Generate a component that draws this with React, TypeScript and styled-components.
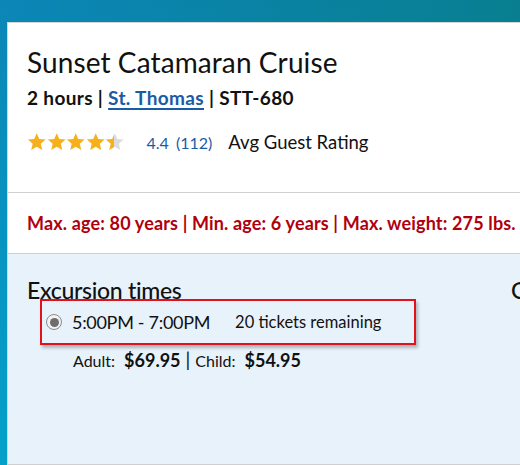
import React from "react";
import styled, { createGlobalStyle } from "styled-components";

const Global = createGlobalStyle`
  html, body { margin: 0; padding: 0; }
  body {
    width: 520px;
    height: 465px;
    overflow: hidden;
    font-family: Lato, "Open Sans", sans-serif;
    background:
      linear-gradient(to right, rgba(8,126,140,0) 0%, rgba(8,126,140,0.9) 100%),
      linear-gradient(to bottom, #0b86b7 0%, #04a1ca 100%);
  }
`;

const Page = styled.div`
  padding: 22px 0 0 7px;
  height: 465px;
  box-sizing: border-box;
  overflow: hidden;
`;

const Card = styled.div`
  width: 640px;
  height: 443px;
  background: #fff;
  border-top: 1px solid #d6d6d6;
  border-left: 1px solid #d6d6d6;
  display: flex;
  flex-direction: column;
  box-sizing: border-box;
`;

const Header = styled.div`
  padding: 22px 0 0 19px;
  height: 170px;
  box-sizing: border-box;
  border-bottom: 1px solid #d0d0d0;
`;

const Title = styled.h1`
  margin: 0;
  font-weight: 400;
  font-size: 28px;
  line-height: 34px;
  color: #111;
  letter-spacing: 0.1px;
`;

const Meta = styled.div`
  font-size: 19px;
  font-weight: 700;
  color: #111;
  margin-top: 7px;
  line-height: 24px;
  letter-spacing: 0.35px;
`;

const Link = styled.a`
  color: #1a5ba6;
  text-decoration: underline;
  text-underline-offset: 3px;
  text-decoration-thickness: 2px;
`;

const RatingRow = styled.div`
  display: flex;
  align-items: center;
  margin-top: 21px;
`;

const Stars = styled.div`
  display: flex;
  margin-right: 22px;
`;

const Score = styled.span`
  color: #1a5ba6;
  font-size: 16px;
  margin-right: 16px;
  word-spacing: 3px;
`;

const RatingLabel = styled.span`
  color: #111;
  font-size: 18.5px;
`;

const Restrictions = styled.div`
  height: 61px;
  box-sizing: border-box;
  padding: 0 0 0 19px;
  display: flex;
  align-items: center;
  color: #b0000e;
  font-size: 18px;
  font-weight: 700;
  letter-spacing: 0.15px;
  border-bottom: 1px solid #cfcfcf;
  white-space: nowrap;
`;

const Lower = styled.div`
  flex: 1;
  background: #e8f2fb;
  display: flex;
  padding: 24px 0 0 19px;
  border-bottom: 1px solid #cfcfcf;
`;

const Column = styled.div<{ $width: number }>`
  width: ${(p) => p.$width}px;
  flex-shrink: 0;
`;

const SectionTitle = styled.h2`
  margin: 0;
  font-size: 23px;
  font-weight: 500;
  line-height: 24px;
  color: #111;
  letter-spacing: -0.3px;
  white-space: nowrap;
`;

const TimeBox = styled.label`
  display: flex;
  align-items: center;
  width: 376px;
  height: 46px;
  box-sizing: border-box;
  margin: -3px 0 0 13px;
  border: 2px solid #e2121b;
  box-shadow: 2px 3px 3px rgba(0,0,0,0.25);
  padding-left: 4px;
`;

const Radio = styled.span`
  width: 14px;
  height: 14px;
  border-radius: 50%;
  border: 1px solid #8a8a8a;
  background: #f3f3f3;
  display: flex;
  align-items: center;
  justify-content: center;
  margin-right: 10px;
  &::after {
    content: "";
    width: 9px;
    height: 9px;
    border-radius: 50%;
    background: #6e6e6e;
  }
`;

const TimeText = styled.span`
  font-size: 18px;
  letter-spacing: -0.3px;
  color: #111;
  margin-right: 25px;
`;

const Remaining = styled.span`
  font-size: 16.5px;
  color: #111;
`;

const Prices = styled.div`
  margin: 3px 0 0 46px;
  display: flex;
  align-items: baseline;
  color: #111;
  font-size: 16px;
`;

const PriceLabel = styled.span`
  margin-right: 9px;
`;

const PriceValue = styled.span`
  font-weight: 700;
  font-size: 18px;
`;

const Sep = styled.span`
  font-size: 19px;
  margin: 0 5px;
`;

const Star = ({ fill }: { fill: number }) => {
  const id = `g${Math.round(fill * 100)}`;
  return (
    <svg width="19.5" height="19.5" viewBox="0 0 24 24">
      <defs>
        <linearGradient id={id}>
          <stop offset={`${fill * 100}%`} stopColor="#f5b01b" />
          <stop offset={`${fill * 100}%`} stopColor="#dcdcdc" />
        </linearGradient>
      </defs>
      <path
        d="M12 1.5l3.1 7.2 7.8.6-5.9 5.1 1.8 7.6L12 18l-6.8 4 1.8-7.6-5.9-5.1 7.8-.6z"
        fill={`url(#${id})`}
      />
    </svg>
  );
};

export default function App() {
  return (
    <>
      <Global />
      <Page>
        <Card>
          <Header>
            <Title>Sunset Catamaran Cruise</Title>
            <Meta>
              2 hours | <Link href="#">St. Thomas</Link> | STT-680
            </Meta>
            <RatingRow>
              <Stars>
                <Star fill={1} />
                <Star fill={1} />
                <Star fill={1} />
                <Star fill={1} />
                <Star fill={0.45} />
              </Stars>
              <Score>4.4 (112)</Score>
              <RatingLabel>Avg Guest Rating</RatingLabel>
            </RatingRow>
          </Header>
          <Restrictions>
            Max. age: 80 years | Min. age: 6 years | Max. weight: 275 lbs.
          </Restrictions>
          <Lower>
            <Column $width={484}>
              <SectionTitle>Excursion times</SectionTitle>
              <TimeBox>
                <Radio />
                <TimeText>5:00PM - 7:00PM</TimeText>
                <Remaining>20 tickets remaining</Remaining>
              </TimeBox>
              <Prices>
                <PriceLabel>Adult:</PriceLabel>
                <PriceValue>$69.95</PriceValue>
                <Sep>|</Sep>
                <PriceLabel>Child:</PriceLabel>
                <PriceValue>$54.95</PriceValue>
              </Prices>
            </Column>
            <Column $width={200}>
              <SectionTitle>Guests</SectionTitle>
            </Column>
          </Lower>
        </Card>
      </Page>
    </>
  );
}
